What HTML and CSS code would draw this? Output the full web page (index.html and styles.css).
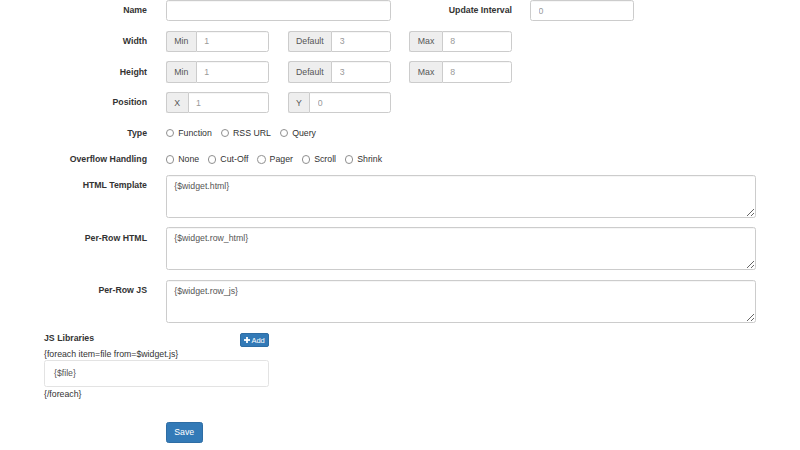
FILE: index.html
```html
<!DOCTYPE html>
<html>
<head>
<meta charset="utf-8">
<link rel="stylesheet" href="styles.css">
</head>
<body>
<form class="form">
  <div class="group">
    <label class="lbl">Name</label>
    <input class="fc w-name" type="text">
    <label class="lbl lbl-upd">Update Interval</label>
    <input class="fc w-upd" type="text" placeholder="0">
  </div>
  <div class="group">
    <label class="lbl">Width</label>
    <div class="groups">
      <div class="ig"><span class="addon">Min</span><input class="fc ig-in" type="text" placeholder="1"></div>
      <div class="ig"><span class="addon">Default</span><input class="fc ig-in" type="text" placeholder="3"></div>
      <div class="ig"><span class="addon">Max</span><input class="fc ig-in" type="text" placeholder="8"></div>
    </div>
  </div>
  <div class="group">
    <label class="lbl">Height</label>
    <div class="groups">
      <div class="ig"><span class="addon">Min</span><input class="fc ig-in" type="text" placeholder="1"></div>
      <div class="ig"><span class="addon">Default</span><input class="fc ig-in" type="text" placeholder="3"></div>
      <div class="ig"><span class="addon">Max</span><input class="fc ig-in" type="text" placeholder="8"></div>
    </div>
  </div>
  <div class="group">
    <label class="lbl">Position</label>
    <div class="groups">
      <div class="ig"><span class="addon">X</span><input class="fc ig-in" type="text" placeholder="1"></div>
      <div class="ig"><span class="addon">Y</span><input class="fc ig-in" type="text" placeholder="0"></div>
    </div>
  </div>
  <div class="group">
    <label class="lbl">Type</label>
    <div class="radios">
      <label class="ri"><input type="radio" name="type">Function</label>
      <label class="ri"><input type="radio" name="type">RSS URL</label>
      <label class="ri"><input type="radio" name="type">Query</label>
    </div>
  </div>
  <div class="group">
    <label class="lbl">Overflow Handling</label>
    <div class="radios">
      <label class="ri"><input type="radio" name="of">None</label>
      <label class="ri"><input type="radio" name="of">Cut-Off</label>
      <label class="ri"><input type="radio" name="of">Pager</label>
      <label class="ri"><input type="radio" name="of">Scroll</label>
      <label class="ri"><input type="radio" name="of">Shrink</label>
    </div>
  </div>
  <div class="group">
    <label class="lbl">HTML Template</label>
    <textarea class="fc ta">{$widget.html}</textarea>
  </div>
  <div class="group">
    <label class="lbl">Per-Row HTML</label>
    <textarea class="fc ta">{$widget.row_html}</textarea>
  </div>
  <div class="group">
    <label class="lbl">Per-Row JS</label>
    <textarea class="fc ta">{$widget.row_js}</textarea>
  </div>
  <div class="libs">
    <div class="libs-head">
      <label class="libs-lbl">JS Libraries</label>
      <button type="button" class="btn btn-xs"><svg class="plus" width="6" height="6" viewBox="0 0 6 6"><rect x="2.1" y="0" width="1.8" height="6" fill="#fff"/><rect x="0" y="2.1" width="6" height="1.8" fill="#fff"/></svg>Add</button>
    </div>
    <div class="tpl">{foreach item=file from=$widget.js}</div>
    <div class="filebox">{$file}</div>
    <div class="tpl">{/foreach}</div>
  </div>
  <div class="save-row">
    <button type="submit" class="btn btn-save">Save</button>
  </div>
</form>
</body>
</html>
```

FILE: styles.css
```css
body {
  margin: 0;
  background: #fff;
  color: #333;
  font-family: "Liberation Sans", Arial, Helvetica, sans-serif;
  font-size: 8.75px;
  line-height: 12.5px;
}
.form {
  margin: 0;
  padding: 0;
}
.group {
  display: flex;
  align-items: flex-start;
  margin-bottom: 9.375px;
}
.lbl {
  flex: none;
  width: 147px;
  margin-right: 18.75px;
  padding-top: 4.375px;
  text-align: right;
  font-weight: bold;
  line-height: 12.5px;
}
.lbl-upd {
  width: 121.5px;
  margin-left: 0;
  margin-right: 18px;
}
.fc {
  display: block;
  box-sizing: border-box;
  height: 21.25px;
  margin: 0;
  padding: 3.75px 7.5px;
  font-family: inherit;
  font-size: 8.75px;
  line-height: 12.5px;
  color: #555;
  background: #fff;
  border: 1px solid #ccc;
  border-radius: 2.5px;
  box-shadow: inset 0 0.6px 0.6px rgba(0, 0, 0, 0.075);
  outline: none;
}
.fc::placeholder {
  color: #999;
}
.w-name {
  width: 224.75px;
}
.w-upd {
  width: 103.5px;
}
.groups {
  display: flex;
  gap: 18.75px;
}
.ig {
  display: flex;
  width: 103px;
  height: 21.25px;
}
.addon {
  flex: none;
  box-sizing: border-box;
  height: 21.25px;
  padding: 3.75px 7.5px;
  background: #eee;
  color: #555;
  border: 1px solid #ccc;
  border-right: 0;
  border-radius: 2.5px 0 0 2.5px;
  line-height: 12.5px;
}
.ig-in {
  flex: 1;
  min-width: 0;
  width: auto;
  border-radius: 0 2.5px 2.5px 0;
}
.radios {
  display: flex;
  gap: 8.7px;
  padding-top: 4.375px;
}
.ri {
  display: flex;
  align-items: center;
  height: 12.5px;
  line-height: 12.5px;
}
.ri input {
  appearance: none;
  -webkit-appearance: none;
  box-sizing: border-box;
  width: 8.5px;
  height: 8.5px;
  margin: 0 4px 0 0;
  border: 1px solid #8f8f8f;
  border-radius: 50%;
  background: #fff;
}
.ta {
  width: 590.25px;
  height: 43px;
  resize: vertical;
}
.libs {
  width: 224.75px;
  margin-left: 44px;
  padding-top: 0;
}
.libs-head {
  display: flex;
  justify-content: space-between;
  align-items: flex-start;
}
.libs-lbl {
  font-weight: bold;
  line-height: 12.5px;
}
.btn {
  box-sizing: border-box;
  color: #fff;
  background: #337ab7;
  border: 1px solid #2e6da4;
  font-family: inherit;
  cursor: pointer;
}
.btn-xs {
  display: flex;
  align-items: center;
  gap: 1.5px;
  height: 13.75px;
  margin-top: 1px;
  padding: 0 3px;
  font-size: 7.5px;
  line-height: 11px;
  border-radius: 2px;
}
.plus {
  display: block;
}
.tpl {
  margin-top: 1px;
  line-height: 12.5px;
}
.filebox {
  box-sizing: border-box;
  height: 26.25px;
  padding: 0 9px;
  border: 1px solid #e3e3e3;
  border-radius: 2.5px;
  color: #555;
  line-height: 24.25px;
}
.save-row {
  padding-left: 165.75px;
  padding-top: 21.5px;
}
.btn-save {
  height: 21.25px;
  padding: 0 7.5px;
  font-size: 8.75px;
  line-height: 19px;
  border-radius: 2.5px;
}
```
